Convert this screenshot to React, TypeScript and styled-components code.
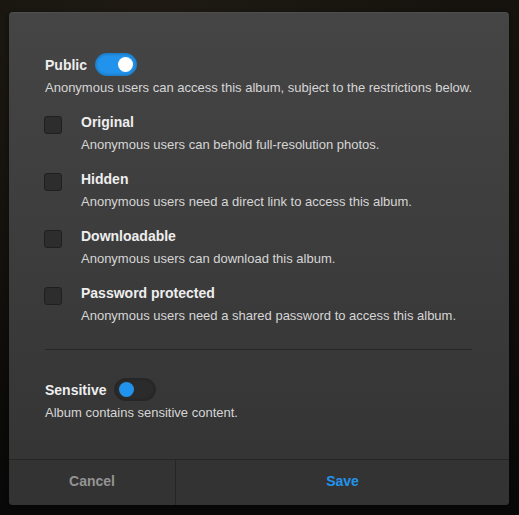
import React, { useState } from 'react'
import styled, { createGlobalStyle } from 'styled-components'

const GlobalStyle = createGlobalStyle`
  html, body {
    margin: 0;
    padding: 0;
    background: #0c0b09;
  }

  body {
    font-family: "Liberation Sans", Arial, sans-serif;
    -webkit-font-smoothing: antialiased;
  }

  * {
    box-sizing: border-box;
  }
`

const Backdrop = styled.div`
  width: 519px;
  height: 515px;
  padding: 12px 10px 0 9px;
  background:
    radial-gradient(ellipse at 30% 0%, #1e1a13 0%, rgba(20, 17, 12, 0) 60%),
    linear-gradient(to bottom, #16130e 0%, #0d0c0a 70%, #080808 100%);
`

const Dialog = styled.div`
  width: 500px;
  display: flex;
  flex-direction: column;
  background: linear-gradient(to bottom, #454545, #333333);
  border-radius: 4px;
  box-shadow: 0 1px 4px rgba(0, 0, 0, 0.4), inset 0 1px 0 rgba(255, 255, 255, 0.05);
  overflow: hidden;
`

const Content = styled.div`
  padding: 41px 37px 36px 36px;
  display: flex;
  flex-direction: column;
`

const SwitchRow = styled.label`
  display: flex;
  align-items: center;
  gap: 8px;
  height: 23px;
  cursor: pointer;
`

const Heading = styled.span`
  font-size: 14px;
  font-weight: 700;
  color: #eeeeee;
  line-height: 20px;
`

const Description = styled.p`
  margin: 2px 0 0;
  font-size: 13px;
  line-height: 20px;
  color: #d6d6d6;
  white-space: nowrap;
`

const OptionDescription = styled(Description)`
  margin-top: 3px;
`

const Track = styled.span<{ on: boolean }>`
  position: relative;
  display: inline-block;
  width: 42px;
  height: 23px;
  border-radius: 12px;
  background: ${({ on }) => (on ? '#2293ec' : '#2b2b2b')};
  border: 1px solid ${({ on }) => (on ? '#1b7fcd' : '#262626')};
  box-shadow: inset 0 0 3px rgba(0, 0, 0, 0.25);
`

const Knob = styled.span<{ on: boolean }>`
  position: absolute;
  top: 3px;
  left: ${({ on }) => (on ? '22px' : '4px')};
  width: 15px;
  height: 15px;
  border-radius: 50%;
  background: ${({ on }) => (on ? '#ffffff' : '#2293ec')};
`

const Options = styled.div`
  display: flex;
  flex-direction: column;
  gap: 14px;
  margin-top: 14px;
`

const Option = styled.label`
  display: grid;
  grid-template-columns: 18px 1fr;
  column-gap: 18px;
  cursor: pointer;
`

const Box = styled.span<{ checked: boolean }>`
  grid-row: 1 / span 2;
  width: 18px;
  height: 18px;
  margin-top: 4px;
  margin-left: -1px;
  border-radius: 3px;
  background: #2d2d2d;
  border: 1px solid #1f1f1f;
  color: #2293ec;
  font-size: 13px;
  line-height: 16px;
  text-align: center;
`

const Divider = styled.hr`
  margin: 23px 0 28px;
  border: 0;
  border-top: 1px solid #262626;
  height: 0;
`

const Footer = styled.div`
  display: grid;
  grid-template-columns: 167px 1fr;
  height: 46px;
  border-top: 1px solid #262626;
  background: #333333;
`

const FooterButton = styled.button<{ primary?: boolean }>`
  appearance: none;
  border: 0;
  border-right: ${({ primary }) => (primary ? '0' : '1px solid #262626')};
  background: transparent;
  font-family: inherit;
  font-size: 14px;
  font-weight: 700;
  color: ${({ primary }) => (primary ? '#2293ec' : '#939393')};
  cursor: pointer;
  padding: 0 0 4px;
`

type Toggle = { on: boolean; onClick: () => void }

const Switch = ({ on, onClick }: Toggle) => (
  <Track on={on} onClick={onClick}>
    <Knob on={on} />
  </Track>
)

const options = [
  { key: 'original', title: 'Original', desc: 'Anonymous users can behold full-resolution photos.' },
  { key: 'hidden', title: 'Hidden', desc: 'Anonymous users need a direct link to access this album.' },
  { key: 'downloadable', title: 'Downloadable', desc: 'Anonymous users can download this album.' },
  {
    key: 'password',
    title: 'Password protected',
    desc: 'Anonymous users need a shared password to access this album.',
  },
]

export default function App() {
  const [isPublic, setPublic] = useState(true)
  const [sensitive, setSensitive] = useState(false)
  const [checked, setChecked] = useState<Record<string, boolean>>({})

  return (
    <>
      <GlobalStyle />
      <Backdrop>
        <Dialog>
          <Content>
            <SwitchRow>
              <Heading>Public</Heading>
              <Switch on={isPublic} onClick={() => setPublic(!isPublic)} />
            </SwitchRow>
            <Description>Anonymous users can access this album, subject to the restrictions below.</Description>

            <Options>
              {options.map((o) => (
                <Option key={o.key} onClick={() => setChecked({ ...checked, [o.key]: !checked[o.key] })}>
                  <Box checked={!!checked[o.key]}>{checked[o.key] ? '✓' : ''}</Box>
                  <Heading>{o.title}</Heading>
                  <OptionDescription>{o.desc}</OptionDescription>
                </Option>
              ))}
            </Options>

            <Divider />

            <SwitchRow>
              <Heading>Sensitive</Heading>
              <Switch on={sensitive} onClick={() => setSensitive(!sensitive)} />
            </SwitchRow>
            <Description>Album contains sensitive content.</Description>
          </Content>

          <Footer>
            <FooterButton>Cancel</FooterButton>
            <FooterButton primary>Save</FooterButton>
          </Footer>
        </Dialog>
      </Backdrop>
    </>
  )
}
